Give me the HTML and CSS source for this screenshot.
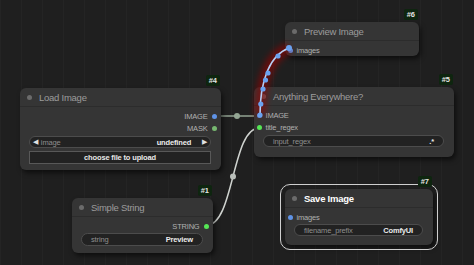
FILE: index.html
```html
<!DOCTYPE html>
<html lang="en">
<head>
    <meta charset="UTF-8">
    <meta name="viewport" content="width=device-width, initial-scale=1.0">
    <title>ComfyUI - graph</title>
    <link rel="stylesheet" href="styles.css">
</head>
<body>
    <div class="canvas">
        <!-- links under the nodes -->
        <svg class="links" width="474" height="265" viewBox="0 0 474 265">
            <line x1="214" y1="116" x2="259" y2="116" class="link-image"/>
            <circle cx="237" cy="116" r="3" class="link-image-dot"/>
            <path d="M207 225 C 234 225, 232 128, 259 128" class="link-string"/>
            <circle cx="233" cy="176.5" r="3" class="link-string-dot"/>
        </svg>

        <div class="node node-load">
            <span class="badge">#4</span>
            <div class="node-title"><span class="title-dot"></span>Load Image</div>
            <div class="node-body">
                <div class="slot slot-out"><span>IMAGE</span><i class="dot dot-image"></i></div>
                <div class="slot slot-out"><span>MASK</span><i class="dot dot-mask"></i></div>
                <div class="widget combo">
                    <span class="arrow">&#9664;</span>
                    <span class="widget-label">image</span>
                    <span class="widget-value">undefined</span>
                    <span class="arrow">&#9654;</span>
                </div>
                <div class="widget button">choose file to upload</div>
            </div>
        </div>

        <div class="node node-preview">
            <span class="badge">#6</span>
            <div class="node-title"><span class="title-dot"></span>Preview Image</div>
            <div class="node-body">
                <div class="slot slot-in"><i class="dot dot-image"></i><span>images</span></div>
            </div>
        </div>

        <div class="node node-anything">
            <span class="badge">#5</span>
            <div class="node-title"><span class="title-dot"></span>Anything Everywhere?</div>
            <div class="node-body">
                <div class="slot slot-in"><i class="dot dot-image"></i><span>IMAGE</span></div>
                <div class="slot slot-in"><i class="dot dot-string"></i><span>title_regex</span></div>
                <div class="widget text">
                    <span class="widget-label">input_regex</span>
                    <span class="widget-value">.*</span>
                </div>
            </div>
        </div>

        <div class="node node-string">
            <span class="badge">#1</span>
            <div class="node-title"><span class="title-dot"></span>Simple String</div>
            <div class="node-body">
                <div class="slot slot-out"><span>STRING</span><i class="dot dot-string"></i></div>
                <div class="widget text">
                    <span class="widget-label">string</span>
                    <span class="widget-value">Preview</span>
                </div>
            </div>
        </div>

        <div class="node node-save selected">
            <span class="badge">#7</span>
            <div class="node-title"><span class="title-dot"></span>Save Image</div>
            <div class="node-body">
                <div class="slot slot-in"><i class="dot dot-image"></i><span>images</span></div>
                <div class="widget text">
                    <span class="widget-label">filename_prefix</span>
                    <span class="widget-value">ComfyUI</span>
                </div>
            </div>
        </div>

        <!-- highlighted link, drawn on top -->
        <svg class="links links-over" width="474" height="265" viewBox="0 0 474 265">
            <defs>
                <filter id="glow" x="-50%" y="-50%" width="200%" height="200%">
                    <feGaussianBlur stdDeviation="3"/>
                </filter>
            </defs>
            <path d="M260 115 C 260 80, 270 55, 289 48" class="link-glow" filter="url(#glow)"/>
            <path d="M260 115 C 260 80, 270 55, 289 48" class="link-hl"/>
            <circle cx="260" cy="115" r="2.6" class="link-hl-dot"/>
            <circle cx="260.8" cy="104" r="2.6" class="link-hl-dot"/>
            <circle cx="263" cy="89" r="2.6" class="link-hl-dot"/>
            <circle cx="265.5" cy="80" r="2.6" class="link-hl-dot"/>
            <circle cx="268" cy="73" r="2.6" class="link-hl-dot"/>
            <circle cx="278" cy="56" r="2.6" class="link-hl-dot"/>
            <circle cx="289" cy="48" r="3" class="link-hl-dot"/>
        </svg>
    </div>
</body>
</html>
```

FILE: styles.css
```css
* {
    margin: 0;
    padding: 0;
    box-sizing: border-box;
}

body {
    font-family: "Liberation Sans", Arial, sans-serif;
    background-color: #1f1f1f;
    overflow: hidden;
}

.canvas {
    position: relative;
    width: 474px;
    height: 265px;
    background-color: #1f1f1f;
    background-image: repeating-linear-gradient(90deg, rgba(255,255,255,0.025) 0 1px, transparent 1px 21px);
}

/* links */
.links {
    position: absolute;
    left: 0;
    top: 0;
}

.links-over {
    pointer-events: none;
}

.link-image {
    stroke: #93a593;
    stroke-width: 1.6;
}

.link-image-dot {
    fill: #93a593;
}

.link-string {
    fill: none;
    stroke: #cfd3cf;
    stroke-width: 1.5;
}

.link-string-dot {
    fill: #b9beb9;
}

.link-glow {
    fill: none;
    stroke: rgba(150, 8, 8, 0.6);
    stroke-width: 11;
}

.link-hl {
    fill: none;
    stroke: #b7cdf3;
    stroke-width: 1.6;
}

.link-hl-dot {
    fill: #6aa2f0;
}

/* nodes */
.node {
    position: absolute;
    background: #353535;
    border-radius: 6px;
    box-shadow: 2px 3px 5px rgba(0,0,0,0.55);
    color: #a8a8a8;
}

.node-load {
    left: 20px;
    top: 88px;
    width: 201px;
    height: 82px;
}

.node-preview {
    left: 285px;
    top: 22px;
    width: 134px;
    height: 34px;
}

.node-anything {
    left: 254px;
    top: 87px;
    width: 200px;
    height: 70px;
}

.node-string {
    left: 72px;
    top: 198px;
    width: 141px;
    height: 55px;
}

.node-save {
    left: 285px;
    top: 189px;
    width: 148px;
    height: 56px;
}

.selected::after {
    content: '';
    position: absolute;
    top: -5px;
    left: -5px;
    right: -5px;
    bottom: -5px;
    border: 1.5px solid #cfcfcf;
    border-radius: 10px;
}

.badge {
    position: absolute;
    right: 1px;
    top: -13px;
    height: 11px;
    padding: 0 3px;
    background: #0e250f;
    color: #e4e4e4;
    font-size: 7.5px;
    font-weight: bold;
    line-height: 11px;
    border-radius: 2px;
    z-index: 2;
}

.node-title {
    display: flex;
    align-items: center;
    gap: 7px;
    height: 19px;
    padding-left: 7px;
    font-size: 9.5px;
    letter-spacing: -0.25px;
    color: #9c9c9c;
    border-bottom: 1px solid #2c2c2c;
}

.selected .node-title {
    color: #ffffff;
    font-weight: bold;
}

.title-dot {
    width: 5px;
    height: 5px;
    border-radius: 50%;
    background: #6b6b6b;
}

.node-body {
    padding-top: 3px;
}

/* slots */
.slot {
    display: flex;
    align-items: center;
    gap: 4px;
    height: 12px;
    font-size: 7.5px;
    letter-spacing: -0.2px;
    color: #b0b0b0;
}

.slot-out {
    justify-content: flex-end;
    padding-right: 4.5px;
}

.slot-in {
    padding-left: 2.5px;
}

.dot {
    width: 5px;
    height: 5px;
    border-radius: 50%;
}

.dot-image {
    background: #5f93e6;
}

.dot-mask {
    background: #77b870;
}

.dot-string {
    background: #55e655;
}

/* widgets */
.widget {
    display: flex;
    align-items: center;
    margin: 0 10px 0 9px;
    height: 12px;
    background: #222222;
    border: 1px solid #4c4c4c;
    font-size: 7.5px;
    letter-spacing: -0.15px;
    color: #8f8f8f;
}

.combo,
.text {
    border-radius: 7px;
    padding: 0 9px 0 9px;
}

.combo {
    margin-top: 2px;
    padding: 0 3px 0 3px;
}

.arrow {
    font-size: 6.5px;
    color: #e0e0e0;
}

.combo .widget-label {
    margin-left: 3px;
}

.combo .widget-value {
    margin-right: 11px;
}

.widget-value {
    margin-left: auto;
    color: #ececec;
    font-weight: bold;
}

.button {
    justify-content: center;
    margin-top: 3px;
    height: 13px;
    color: #e8e8e8;
    font-weight: bold;
    border-color: #585858;
}

.node-anything .widget {
    margin-top: 2px;
}

.node-string .widget {
    margin-top: 1px;
    height: 13px;
}

.node-save .widget {
    margin-top: 1px;
}
```
